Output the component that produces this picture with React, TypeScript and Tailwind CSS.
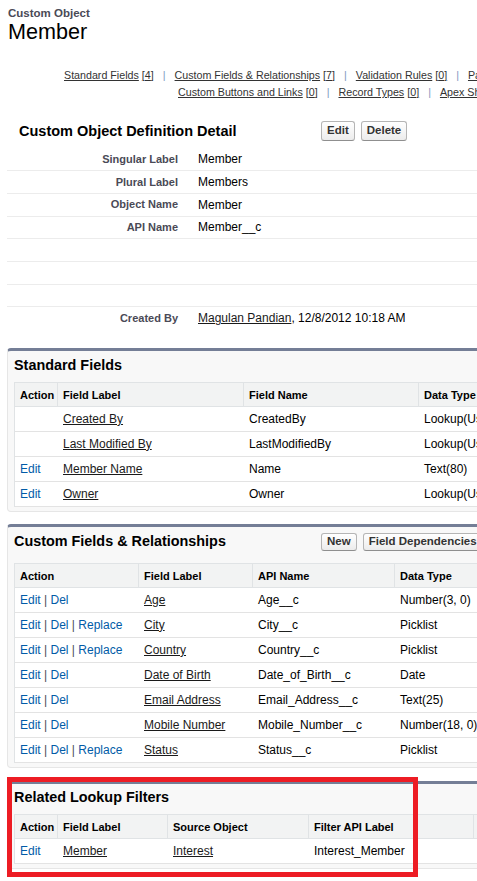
import React from "react";

type Cell = React.ReactNode;

function Btn({ children, h = "h-[20px]" }: { children: React.ReactNode; h?: string }) {
  return (
    <button
      className={`${h} px-[5px] rounded-[3px] border border-[#b5b5b5] border-b-[#8f8f8f] bg-linear-to-b from-white to-[#ececec] text-[11.5px] font-bold text-[#333] leading-none whitespace-nowrap`}
    >
      {children}
    </button>
  );
}

function Lnk({ children }: { children: React.ReactNode }) {
  return <span className="underline text-[#1a1a1a]">{children}</span>;
}

function Act({ items }: { items: string[] }) {
  return (
    <span className="text-[#015ba7]">
      {items.map((t, i) => (
        <React.Fragment key={t}>
          {i > 0 && <span className="text-[#4a4a56]"> | </span>}
          {t}
        </React.Fragment>
      ))}
    </span>
  );
}

function NavRow({ items, className }: { items: [string, number][]; className: string }) {
  return (
    <div className={`flex items-center h-[17px] whitespace-nowrap ${className}`}>
      {items.map(([label, n], i) => (
        <React.Fragment key={label}>
          {i > 0 && <span className="mx-[9px] text-[#7d99c0]">|</span>}
          <span className="underline text-[#333]">{label}</span>
          <span className="ml-[3px] underline text-[#333]">[{n}]</span>
        </React.Fragment>
      ))}
    </div>
  );
}

function DataTable({ cols, headers, rows }: { cols: string; headers: string[]; rows: Cell[][] }) {
  return (
    <div className="border-l border-r border-t border-[#e0e3e5] bg-white">
      <div className={`grid ${cols} h-[24px] bg-[#f2f3f3] border-b border-[#e0e3e5]`}>
        {headers.map((h, i) => (
          <div
            key={i}
            className="flex items-center pl-[5px] pt-[2px] border-r border-[#e0e3e5] font-bold text-[11px] text-black whitespace-nowrap overflow-hidden"
          >
            {h}
          </div>
        ))}
      </div>
      {rows.map((r, ri) => (
        <div key={ri} className={`grid ${cols} h-[25px] border-b border-[#e3e3e3]`}>
          {r.map((c, ci) => (
            <div key={ci} className="flex items-center pl-[5px] text-[12px] text-black whitespace-nowrap overflow-hidden">
              {c}
            </div>
          ))}
        </div>
      ))}
    </div>
  );
}

function Block({
  title,
  titleH,
  buttons,
  className = "",
  children,
}: {
  title: string;
  titleH: string;
  buttons?: React.ReactNode;
  className?: string;
  children: React.ReactNode;
}) {
  return (
    <div
      className={`rounded-[4px] border border-[#e6e6e6] border-t-[3px] border-t-[#747e96] bg-[#f8f8f8] px-[6px] pb-[4px] ${className}`}
    >
      <div className={`flex items-center ${titleH}`}>
        <div className="w-[307px] font-bold text-[14.4px] text-black whitespace-nowrap">{title}</div>
        {buttons && <div className="flex gap-[6px]">{buttons}</div>}
      </div>
      {children}
    </div>
  );
}

const detailRows: [string, React.ReactNode][] = [
  ["Singular Label", "Member"],
  ["Plural Label", "Members"],
  ["Object Name", "Member"],
  ["API Name", "Member__c"],
  ["", ""],
  ["", ""],
  ["", ""],
];

export default function App() {
  return (
    <div className="relative w-[477px] h-[881px] overflow-hidden bg-white font-['Liberation_Sans',Arial,sans-serif]">
      <div className="w-[720px]">
        {/* page heading */}
        <div className="pl-[8px] pt-[7px]">
          <div className="text-[11.5px] leading-[13px] font-bold text-[#4a4a56]">Custom Object</div>
          <div className="text-[21.6px] leading-[24px] text-black">Member</div>
        </div>

        {/* related list shortcuts */}
        <div className="mt-[22.5px] text-[10.7px]">
          <NavRow
            className="pl-[64px]"
            items={[
              ["Standard Fields", 4],
              ["Custom Fields & Relationships", 7],
              ["Validation Rules", 0],
              ["Page Layouts", 1],
            ]}
          />
          <NavRow
            className="pl-[178px]"
            items={[
              ["Custom Buttons and Links", 0],
              ["Record Types", 0],
              ["Apex Sharing Reasons", 0],
            ]}
          />
        </div>

        {/* definition detail */}
        <div className="mt-[20.5px] pl-[7px]">
          <div className="flex items-start h-[27.5px]">
            <div className="w-[314px] pl-[12px] leading-[20px] font-bold text-[14.5px] text-black whitespace-nowrap">
              Custom Object Definition Detail
            </div>
            <div className="flex gap-[6px]">
              <Btn>Edit</Btn>
              <Btn>Delete</Btn>
            </div>
          </div>
          {detailRows.map(([label, value], i) => (
            <div key={i} className="flex items-center h-[22.7px] border-b border-[#ececec]">
              <div className="w-[181px] pr-[10px] text-right font-bold text-[11px] text-[#4a4a56]">{label}</div>
              <div className="pl-[10px] text-[12px] text-black">{value}</div>
            </div>
          ))}
          <div className="flex items-center h-[22px]">
            <div className="w-[181px] pr-[10px] text-right font-bold text-[11px] text-[#4a4a56]">Created By</div>
            <div className="pl-[10px] text-[12px] text-black">
              <Lnk>Magulan Pandian</Lnk>, 12/8/2012 10:18 AM
            </div>
          </div>
        </div>

        {/* related lists */}
        <div className="mt-[18.5px] pl-[7px]">
          <Block title="Standard Fields" titleH="h-[31px] pb-[2px]" className="mb-[12px]">
            <DataTable
              cols="grid-cols-[43px_186px_175px_1fr]"
              headers={["Action", "Field Label", "Field Name", "Data Type"]}
              rows={[
                ["", <Lnk>Created By</Lnk>, "CreatedBy", "Lookup(User)"],
                ["", <Lnk>Last Modified By</Lnk>, "LastModifiedBy", "Lookup(User)"],
                [<Act items={["Edit"]} />, <Lnk>Member Name</Lnk>, "Name", "Text(80)"],
                [<Act items={["Edit"]} />, <Lnk>Owner</Lnk>, "Owner", "Lookup(User,Queue)"],
              ]}
            />
          </Block>

          <Block
            title="Custom Fields & Relationships"
            titleH="h-[36px] pb-[6px]"
            className="mb-[13px]"
            buttons={
              <>
                <Btn h="h-[18px]">New</Btn>
                <Btn h="h-[18px]">Field Dependencies</Btn>
              </>
            }
          >
            <DataTable
              cols="grid-cols-[124px_114px_142px_1fr]"
              headers={["Action", "Field Label", "API Name", "Data Type"]}
              rows={[
                [<Act items={["Edit", "Del"]} />, <Lnk>Age</Lnk>, "Age__c", "Number(3, 0)"],
                [<Act items={["Edit", "Del", "Replace"]} />, <Lnk>City</Lnk>, "City__c", "Picklist"],
                [<Act items={["Edit", "Del", "Replace"]} />, <Lnk>Country</Lnk>, "Country__c", "Picklist"],
                [<Act items={["Edit", "Del"]} />, <Lnk>Date of Birth</Lnk>, "Date_of_Birth__c", "Date"],
                [<Act items={["Edit", "Del"]} />, <Lnk>Email Address</Lnk>, "Email_Address__c", "Text(25)"],
                [<Act items={["Edit", "Del"]} />, <Lnk>Mobile Number</Lnk>, "Mobile_Number__c", "Number(18, 0)"],
                [<Act items={["Edit", "Del", "Replace"]} />, <Lnk>Status</Lnk>, "Status__c", "Picklist"],
              ]}
            />
          </Block>

          <Block title="Related Lookup Filters" titleH="h-[30px] pb-[3px]">
            <DataTable
              cols="grid-cols-[43px_110px_141px_165px_1fr]"
              headers={["Action", "Field Label", "Source Object", "Filter API Label", "Active"]}
              rows={[[<Act items={["Edit"]} />, <Lnk>Member</Lnk>, <Lnk>Interest</Lnk>, "Interest_Member", ""]]}
            />
          </Block>
        </div>
      </div>

      {/* highlight frame around the lookup filters list */}
      <div className="absolute left-[7px] top-[777px] w-[411px] h-[100px] border-[5px] border-[#ed1c24]" />
    </div>
  );
}
